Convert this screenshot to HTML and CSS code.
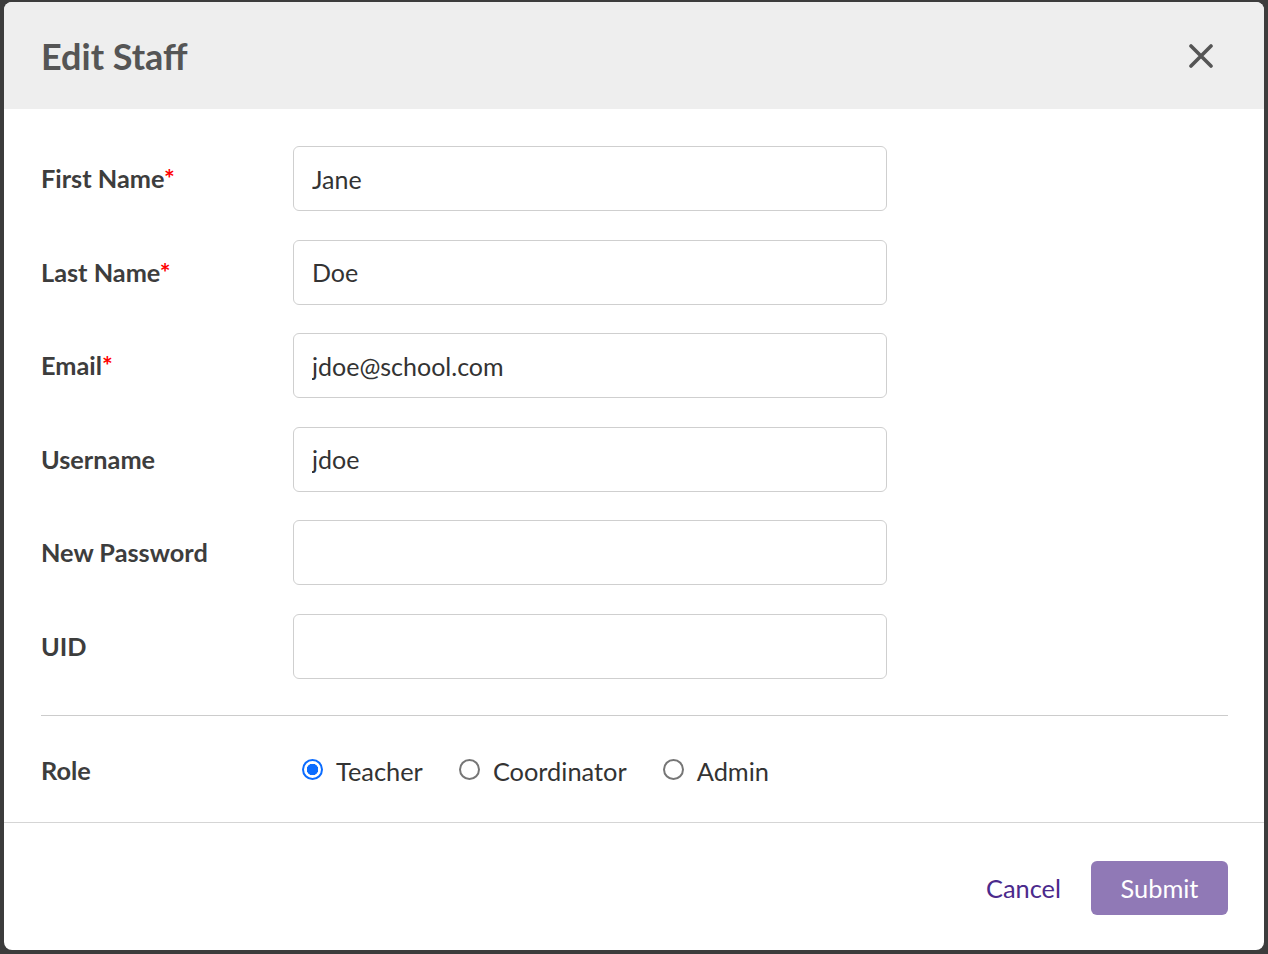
FILE: index.html
```html
<html>
<head>
    <title>Edit Staff</title>
    <link rel="stylesheet" href="styles.css">
</head>
<body>

<div class="modal">
    <!-- Zaglavlje -->
    <div class="modal-header">
        <h2 class="modal-title">Edit Staff</h2>
        <button type="button" class="close-button" aria-label="Close">
            <svg width="24" height="24" viewBox="0 0 24 24">
                <path d="M2 2 L22 22 M22 2 L2 22" stroke="#555" stroke-width="3.6" stroke-linecap="round" fill="none"/>
            </svg>
        </button>
    </div>

    <!-- Polja forme -->
    <div class="modal-body">
        <div class="form-rows">
            <label class="field-label" for="firstName">First Name<span class="required">*</span></label>
            <input class="text-input" type="text" id="firstName" value="Jane">

            <label class="field-label" for="lastName">Last Name<span class="required">*</span></label>
            <input class="text-input" type="text" id="lastName" value="Doe">

            <label class="field-label" for="email">Email<span class="required">*</span></label>
            <input class="text-input" type="text" id="email" value="jdoe@school.com">

            <label class="field-label" for="username">Username</label>
            <input class="text-input" type="text" id="username" value="jdoe">

            <label class="field-label" for="password">New Password</label>
            <input class="text-input" type="password" id="password">

            <label class="field-label" for="uid">UID</label>
            <input class="text-input" type="text" id="uid">
        </div>

        <hr class="divider">

        <div class="role-row">
            <span class="field-label">Role</span>
            <div class="radio-group">
                <label class="radio-option"><input type="radio" name="role" checked> Teacher</label>
                <label class="radio-option"><input type="radio" name="role"> Coordinator</label>
                <label class="radio-option"><input type="radio" name="role"> Admin</label>
            </div>
        </div>
    </div>

    <!-- Dugmad -->
    <div class="modal-footer">
        <button type="button" class="cancel-button">Cancel</button>
        <button type="button" class="submit-button">Submit</button>
    </div>
</div>

</body>
</html>
```

FILE: styles.css
```css
/* Osnovni stil stranice */
body {
    margin: 0;
    background-color: #3c3c3c; /* tamna pozadina iza modala */
    font-family: 'Lato', sans-serif;
}

/* Modal prozor */
.modal {
    margin: 2px 4px 0 4px;
    height: 948px;
    background-color: white;
    border-radius: 8px;
    overflow: hidden;
    display: flex;
    flex-direction: column;
}

/* Zaglavlje */
.modal-header {
    height: 107px;
    flex-shrink: 0;
    background-color: #eeeeee;
    display: flex;
    align-items: center;
    justify-content: space-between;
    padding: 0 51px 0 37px;
}

.modal-title {
    margin: 0;
    font-size: 36px;
    font-weight: bold;
    color: #555555;
}

.close-button {
    background: none;
    border: none;
    padding: 0;
    cursor: pointer;
    display: flex;
    margin-top: 1px;
}

/* Telo forme */
.modal-body {
    padding: 37px 36px 0 37px;
}

.form-rows {
    display: grid;
    grid-template-columns: 252px 594px;
    row-gap: 28.6px;
    align-items: center;
}

.field-label {
    font-size: 25.3px;
    font-weight: bold;
    color: #3d3d3d;
    margin-top: -1px;
}

.required {
    color: #ff0000;
}

.text-input {
    height: 65px;
    box-sizing: border-box;
    border: 1px solid #cfcfcf;
    border-radius: 6px;
    padding: 0 18px;
    font-family: 'Lato', sans-serif;
    font-size: 25px;
    color: #333333;
    outline: none;
}

.divider {
    border: none;
    border-top: 1px solid #cccccc;
    margin: 36px 0 0 0;
}

/* Izbor uloge */
.role-row {
    height: 106px;
    display: grid;
    grid-template-columns: 252px auto;
    align-items: center;
    padding-top: 3px;
    box-sizing: border-box;
}

.radio-group {
    display: flex;
    gap: 36px;
    padding-left: 9px;
    margin-top: 2px;
}

.radio-option {
    display: flex;
    align-items: center;
    gap: 13px;
    font-size: 25.4px;
    color: #333333;
}

.radio-option input {
    appearance: none;
    margin: 0;
    width: 21px;
    height: 21px;
    border: 2px solid #767676;
    border-radius: 50%;
    margin-top: -3px;
    box-sizing: border-box;
}

.radio-option input:checked {
    border: 2px solid #0b6cff;
    background: radial-gradient(circle, #0b6cff 0 5.5px, white 6px);
}

/* Podnožje */
.modal-footer {
    flex: 1;
    border-top: 1px solid #d5d5d5;
    display: flex;
    align-items: center;
    justify-content: flex-end;
    gap: 30px;
    padding: 4px 36px 0 0;
}

.cancel-button {
    background: none;
    border: none;
    padding: 0;
    font-family: 'Lato', sans-serif;
    font-size: 25.4px;
    color: #4b2a8c;
    cursor: pointer;
}

.submit-button {
    width: 137px;
    height: 54px;
    background-color: #9079b6;
    color: white;
    border: none;
    border-radius: 6px;
    font-family: 'Lato', sans-serif;
    font-size: 25.4px;
    cursor: pointer;
}
```
